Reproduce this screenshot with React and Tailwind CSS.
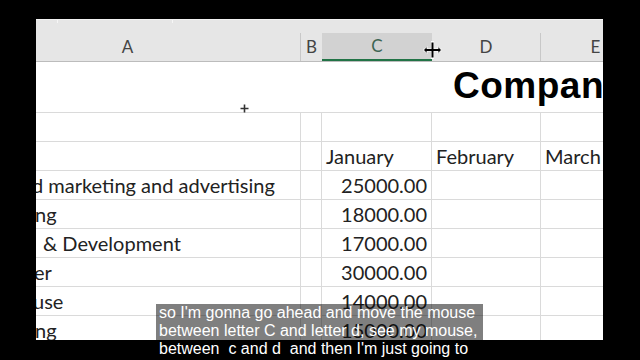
import React from "react";

const rows = [
  { a: "", c: "", d: "", e: "" },
  { a: "", c: "January", d: "February", e: "March" },
  { a: "d marketing and advertising", shift: "-ml-[4px]", c: "25000.00", num: true },
  { a: "ng", shift: "-ml-[1px]", c: "18000.00", num: true },
  { a: "& Development", shift: "ml-[7px]", c: "17000.00", num: true },
  { a: "er", shift: "-ml-[2px]", c: "30000.00", num: true },
  { a: "use", shift: "-ml-[3px]", c: "14000.00", num: true },
  { a: "ng", shift: "-ml-[1px]", c: "15000.00", num: true },
];

function HeaderRow() {
  return (
    <div className="flex h-[29px] bg-[#e6e6e6] border-b border-[#bcbcbc] text-[17px] text-[#444]">
      <div className="w-[265px] shrink-0 flex items-center justify-center pr-[81px] border-r border-[#c8c8c8]">
        A
      </div>
      <div className="w-[21px] shrink-0 flex items-center justify-center">B</div>
      <div className="w-[110px] shrink-0 flex items-center justify-center bg-[#d2d2d2] border-b-2 border-[#217346] text-[#3d6452]">
        C
      </div>
      <div className="w-[109px] shrink-0 flex items-center justify-center border-r border-[#c8c8c8]">D</div>
      <div className="w-[109px] shrink-0 flex items-center justify-center">E</div>
    </div>
  );
}

function DataRow({ row }) {
  return (
    <div className="flex h-[29px] shrink-0 text-[20px] leading-none text-[#222]">
      <div className="w-[265px] shrink-0 flex items-center overflow-hidden whitespace-nowrap border-r border-b border-[#dadada]">
        <span className={row.shift || ""}>{row.a}</span>
      </div>
      <div className="w-[21px] shrink-0 border-r border-b border-[#dadada]" />
      <div
        className={
          row.num
            ? "w-[110px] shrink-0 flex items-center justify-end pr-[4px] border-r border-b border-[#dadada]"
            : "w-[110px] shrink-0 flex items-center pl-[4px] border-r border-b border-[#dadada]"
        }
      >
        {row.c}
      </div>
      <div className="w-[109px] shrink-0 flex items-center pl-[4px] border-r border-b border-[#dadada]">{row.d}</div>
      <div className="w-[109px] shrink-0 flex items-center pl-[4px] border-r border-b border-[#dadada]">{row.e}</div>
    </div>
  );
}

function Sheet() {
  return (
    <div className="w-[567px] h-[321px] overflow-hidden bg-white flex flex-col font-['Lato',sans-serif]">
      <div className="h-[14px] shrink-0 bg-[#e6e6e6] border-t border-[#f2f2f2] flex">
        <div className="w-[21px]" />
        <div className="w-px h-[3px] bg-[#f6f6f6]" />
        <div className="w-[114px]" />
        <div className="w-px h-[3px] bg-[#f6f6f6]" />
      </div>
      <HeaderRow />
      <div className="h-[51px] shrink-0 flex items-center pb-[2px] border-b border-[#dadada] overflow-hidden whitespace-nowrap">
        <span className="pl-[417px] text-[37px] leading-none font-bold tracking-[0.5px] text-black font-['Liberation_Sans',Arial,sans-serif]">
          Company
        </span>
      </div>
      {rows.map((row, i) => (
        <DataRow key={i} row={row} />
      ))}
    </div>
  );
}

function ResizeCursor() {
  return (
    <svg className="absolute left-[422px] top-[41px]" width="21" height="18" viewBox="0 0 21 18">
      <g stroke="#fff" strokeWidth="3" fill="none" strokeLinecap="square">
        <path d="M10.5 1.5v15M3 9h15" />
      </g>
      <path d="M1.5 9l3.5-3.5v7z M19.5 9l-3.5-3.5v7z" fill="#000" stroke="#fff" strokeWidth="0.8" />
      <g stroke="#000" strokeWidth="2" fill="none">
        <path d="M10.5 1.5v15M4 9h13" />
      </g>
    </svg>
  );
}

function CrossCursor() {
  return (
    <svg className="absolute left-[240px] top-[104px]" width="9" height="9" viewBox="0 0 9 9">
      <path d="M4.5 0.5v8M0.5 4.5h8" stroke="#333" strokeWidth="1.6" />
    </svg>
  );
}

export default function App() {
  return (
    <div className="relative w-[640px] h-[360px] overflow-hidden bg-black">
      <div className="pt-[19px] pl-[36px]">
        <Sheet />
      </div>
      <ResizeCursor />
      <CrossCursor />
      <div className="absolute left-[156px] top-[304px] bg-black/50 pl-[3px] pr-[6px] pb-[4px] text-white text-[16px] leading-[18px] whitespace-pre font-['Liberation_Sans',Arial,sans-serif]">
        <div>so I'm gonna go ahead and move the mouse</div>
        <div>between letter C and letter d, see my mouse,</div>
        <div>between  c and d  and then I'm just going to</div>
      </div>
    </div>
  );
}
